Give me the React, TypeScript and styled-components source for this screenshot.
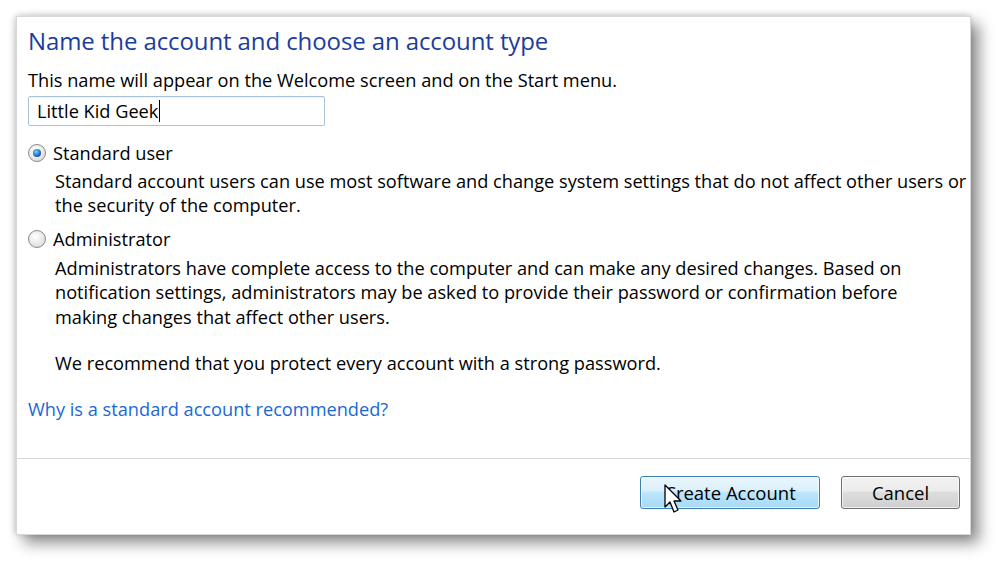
import React from 'react';
import styled, { createGlobalStyle } from 'styled-components';

const GlobalStyle = createGlobalStyle`
  html, body {
    margin: 0;
    padding: 0;
    background: #ffffff;
  }
  body {
    font-family: "Open Sans", "Noto Sans", sans-serif;
    color: #000;
  }
`;

const Page = styled.div`
  width: 1000px;
  height: 563px;
  padding: 16px 29px 30px 16px;
  box-sizing: border-box;
  background: #fff;
`;

const Dialog = styled.div`
  height: 100%;
  display: flex;
  flex-direction: column;
  background: #fff;
  border: 1px solid #d8d8d8;
  box-shadow: 8px 8px 14px rgba(0, 0, 0, 0.45), -2px 0 6px rgba(0, 0, 0, 0.12), 0 -2px 6px rgba(0, 0, 0, 0.08);
`;

const Body = styled.div`
  flex: 1;
  padding: 8px 0 0 11px;
  display: flex;
  flex-direction: column;
`;

const Title = styled.h1`
  margin: 0;
  font-size: 24px;
  font-weight: 400;
  color: #1c3d9e;
  line-height: 32px;
  letter-spacing: -0.1px;
`;

const Text = styled.p<{ $indent?: boolean; $top?: number }>`
  margin: ${p => p.$top ?? 0}px 0 0 ${p => (p.$indent ? 27 : 0)}px;
  font-size: 18.2px;
  line-height: 24.6px;
  white-space: nowrap;
`;

const NameField = styled.div`
  margin-top: 3px;
  width: 297px;
  height: 30px;
  box-sizing: border-box;
  border: 1px solid #a9c3db;
  border-radius: 2px;
  padding: 0 8px;
  display: flex;
  align-items: center;
  font-size: 18.2px;
  color: #000;
  box-shadow: inset 0 1px 1px rgba(0, 0, 0, 0.06);
`;

const Caret = styled.span`
  display: inline-block;
  width: 1px;
  height: 22px;
  margin-left: 1px;
  background: #000;
`;

const Option = styled.label<{ $top: number }>`
  display: flex;
  align-items: center;
  gap: 7px;
  margin-top: ${p => p.$top}px;
  font-size: 18.2px;
  line-height: 25px;
`;

const Radio = styled.span<{ $checked?: boolean }>`
  width: 18px;
  height: 18px;
  border-radius: 50%;
  box-sizing: border-box;
  border: 1px solid #8a8a8a;
  background: radial-gradient(circle at 40% 35%, #ffffff 0%, #e6e6e6 60%, #cfcfcf 100%);
  display: flex;
  align-items: center;
  justify-content: center;
  flex-shrink: 0;

  &::after {
    content: '';
    display: ${p => (p.$checked ? 'block' : 'none')};
    width: 8px;
    height: 8px;
    border-radius: 50%;
    background: radial-gradient(circle at 40% 35%, #7fd0ff 0%, #1f6fb8 55%, #0a3c78 100%);
  }
`;

const Link = styled.a`
  margin-top: 22px;
  font-size: 18.2px;
  line-height: 25px;
  color: #1a68d6;
  text-decoration: none;
  cursor: pointer;
  align-self: flex-start;
`;

const Footer = styled.div`
  height: 76px;
  border-top: 1px solid #d6d6d6;
  display: flex;
  justify-content: flex-end;
  align-items: flex-start;
  padding: 17px 10px 0 0;
  box-sizing: border-box;
  gap: 21px;
`;

const Button = styled.button<{ $primary?: boolean; $width: number }>`
  position: relative;
  width: ${p => p.$width}px;
  height: 33px;
  border-radius: 3px;
  font-family: inherit;
  font-size: 18.5px;
  color: #000;
  padding: 0;
  border: 1px solid ${p => (p.$primary ? '#3c7fb1' : '#707070')};
  background: ${p =>
    p.$primary
      ? 'linear-gradient(#eaf6fd 0%, #d9f0fc 45%, #bee6fd 50%, #a7d9f5 100%)'
      : 'linear-gradient(#f2f2f2 0%, #ebebeb 45%, #dddddd 50%, #cfcfcf 100%)'};
  box-shadow: inset 0 0 0 1px rgba(255, 255, 255, 0.7);
`;

const Cursor = styled.svg`
  position: absolute;
  left: 23px;
  top: 7px;
  width: 20px;
  height: 30px;
`;

export default function App() {
  return (
    <>
      <GlobalStyle />
      <Page>
        <Dialog>
          <Body>
            <Title>Name the account and choose an account type</Title>
            <Text $top={11}>This name will appear on the Welcome screen and on the Start menu.</Text>
            <NameField>
              Little Kid Geek
              <Caret />
            </NameField>
            <Option $top={15}>
              <Radio $checked />
              Standard user
            </Option>
            <Text $indent $top={3}>
              Standard account users can use most software and change system settings that do not affect other users or
              <br />
              the security of the computer.
            </Text>
            <Option $top={9}>
              <Radio />
              Administrator
            </Option>
            <Text $indent $top={4}>
              Administrators have complete access to the computer and can make any desired changes. Based on
              <br />
              notification settings, administrators may be asked to provide their password or confirmation before
              <br />
              making changes that affect other users.
            </Text>
            <Text $indent $top={21}>We recommend that you protect every account with a strong password.</Text>
            <Link>Why is a standard account recommended?</Link>
          </Body>
          <Footer>
            <Button $primary $width={180}>
              Create Account
              <Cursor viewBox="0 0 20 30">
                <path
                  d="M1 1 L1 23 L6 18 L10 28 L14 26 L10 17 L17 17 Z"
                  fill="#ffffff"
                  stroke="#000000"
                  strokeWidth="1.3"
                  strokeLinejoin="round"
                />
              </Cursor>
            </Button>
            <Button $width={119}>Cancel</Button>
          </Footer>
        </Dialog>
      </Page>
    </>
  );
}
